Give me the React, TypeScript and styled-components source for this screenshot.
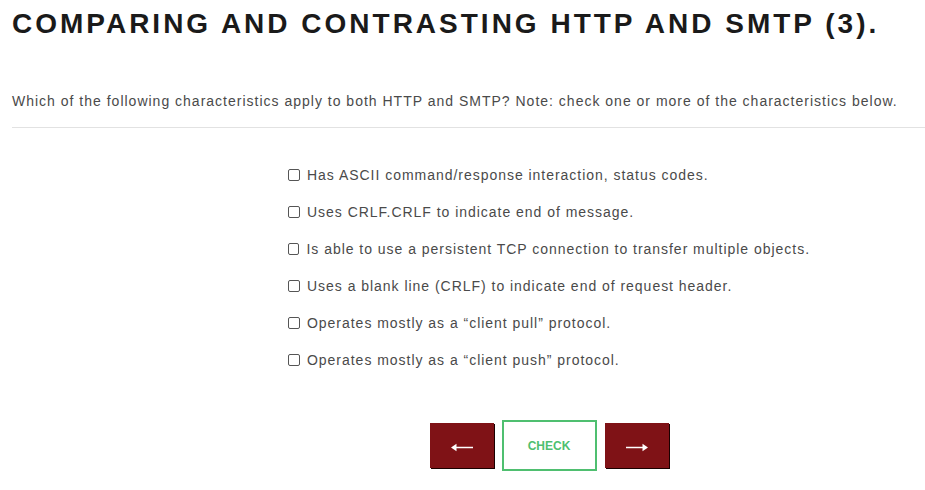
import styled, { createGlobalStyle } from "styled-components";

const GlobalStyle = createGlobalStyle`
  body {
    margin: 0;
    background: #fff;
    font-family: "Liberation Sans", Arial, sans-serif;
  }
`;

const choices = [
  "Has ASCII command/response interaction, status codes.",
  "Uses CRLF.CRLF to indicate end of message.",
  "Is able to use a persistent TCP connection to transfer multiple objects.",
  "Uses a blank line (CRLF) to indicate end of request header.",
  "Operates mostly as a \u201cclient pull\u201d protocol.",
  "Operates mostly as a \u201cclient push\u201d protocol.",
];

const Arrow = ({ flip }: { flip?: boolean }) => (
  <svg
    width="24"
    height="12"
    viewBox="0 0 24 12"
    style={flip ? { transform: "scaleX(-1)" } : undefined}
  >
    <path d="M3 6.5H23" stroke="#fff" strokeWidth="1.5" />
    <path d="M1 6.5L6.5 2.8V10.2Z" fill="#fff" />
  </svg>
);

export default function App() {
  return (
    <>
      <GlobalStyle />
      <Page>
        <Title>Comparing and contrasting HTTP and SMTP (3).</Title>
        <Question>
          Which of the following characteristics apply to both HTTP and SMTP?
          Note: check one or more of the characteristics below.
        </Question>
        <Divider />
        <Quiz>
          <Choices>
            {choices.map((text) => (
              <Choice key={text}>
                <Box type="checkbox" />
                <span>{text}</span>
              </Choice>
            ))}
          </Choices>
          <Nav>
            <ArrowButton aria-label="previous">
              <Arrow />
            </ArrowButton>
            <CheckButton>Check</CheckButton>
            <ArrowButton aria-label="next">
              <Arrow flip />
            </ArrowButton>
          </Nav>
        </Quiz>
      </Page>
    </>
  );
}

const Page = styled.div`
  padding: 8px 0 0 12px;
`;

const Title = styled.h1`
  margin: 0;
  font-size: 28px;
  font-weight: 700;
  letter-spacing: 3px;
  text-transform: uppercase;
  color: #1a1a1a;
  line-height: 32px;
`;

const Question = styled.p`
  margin: 52px 0 0;
  font-size: 14px;
  letter-spacing: 1px;
  line-height: 18px;
  color: #4a4a4a;
`;

const Divider = styled.hr`
  margin: 17px 0 0;
  border: none;
  border-top: 1px solid #e2e2e2;
`;

const Quiz = styled.div`
  width: 522px;
  margin: 38px 0 0 276px;
`;

const Choices = styled.div`
  display: flex;
  flex-direction: column;
  gap: 19px;
`;

const Choice = styled.label`
  display: flex;
  align-items: center;
  gap: 7px;
  font-size: 14px;
  letter-spacing: 0.97px;
  line-height: 18px;
  color: #4a4a4a;
  white-space: nowrap;
`;

const Box = styled.input`
  appearance: none;
  margin: 0;
  width: 12px;
  height: 12px;
  border: 1px solid #555;
  border-radius: 2px;
  background: #fff;
`;

const Nav = styled.div`
  display: flex;
  align-items: center;
  justify-content: center;
  gap: 8px;
  margin-top: 51px;
`;

const ArrowButton = styled.button`
  display: flex;
  align-items: center;
  justify-content: center;
  width: 64px;
  height: 45px;
  border: none;
  background: #7f1216;
  box-shadow: 1px 1px 0 #1a0000;
  padding: 2px 0 0;
`;

const CheckButton = styled.button`
  width: 95px;
  height: 51px;
  border: 2px solid #4fbf70;
  background: #fff;
  color: #4fbf70;
  font-family: "Liberation Sans", Arial, sans-serif;
  font-weight: 700;
  font-size: 12px;
  text-transform: uppercase;
  padding: 0;
`;
